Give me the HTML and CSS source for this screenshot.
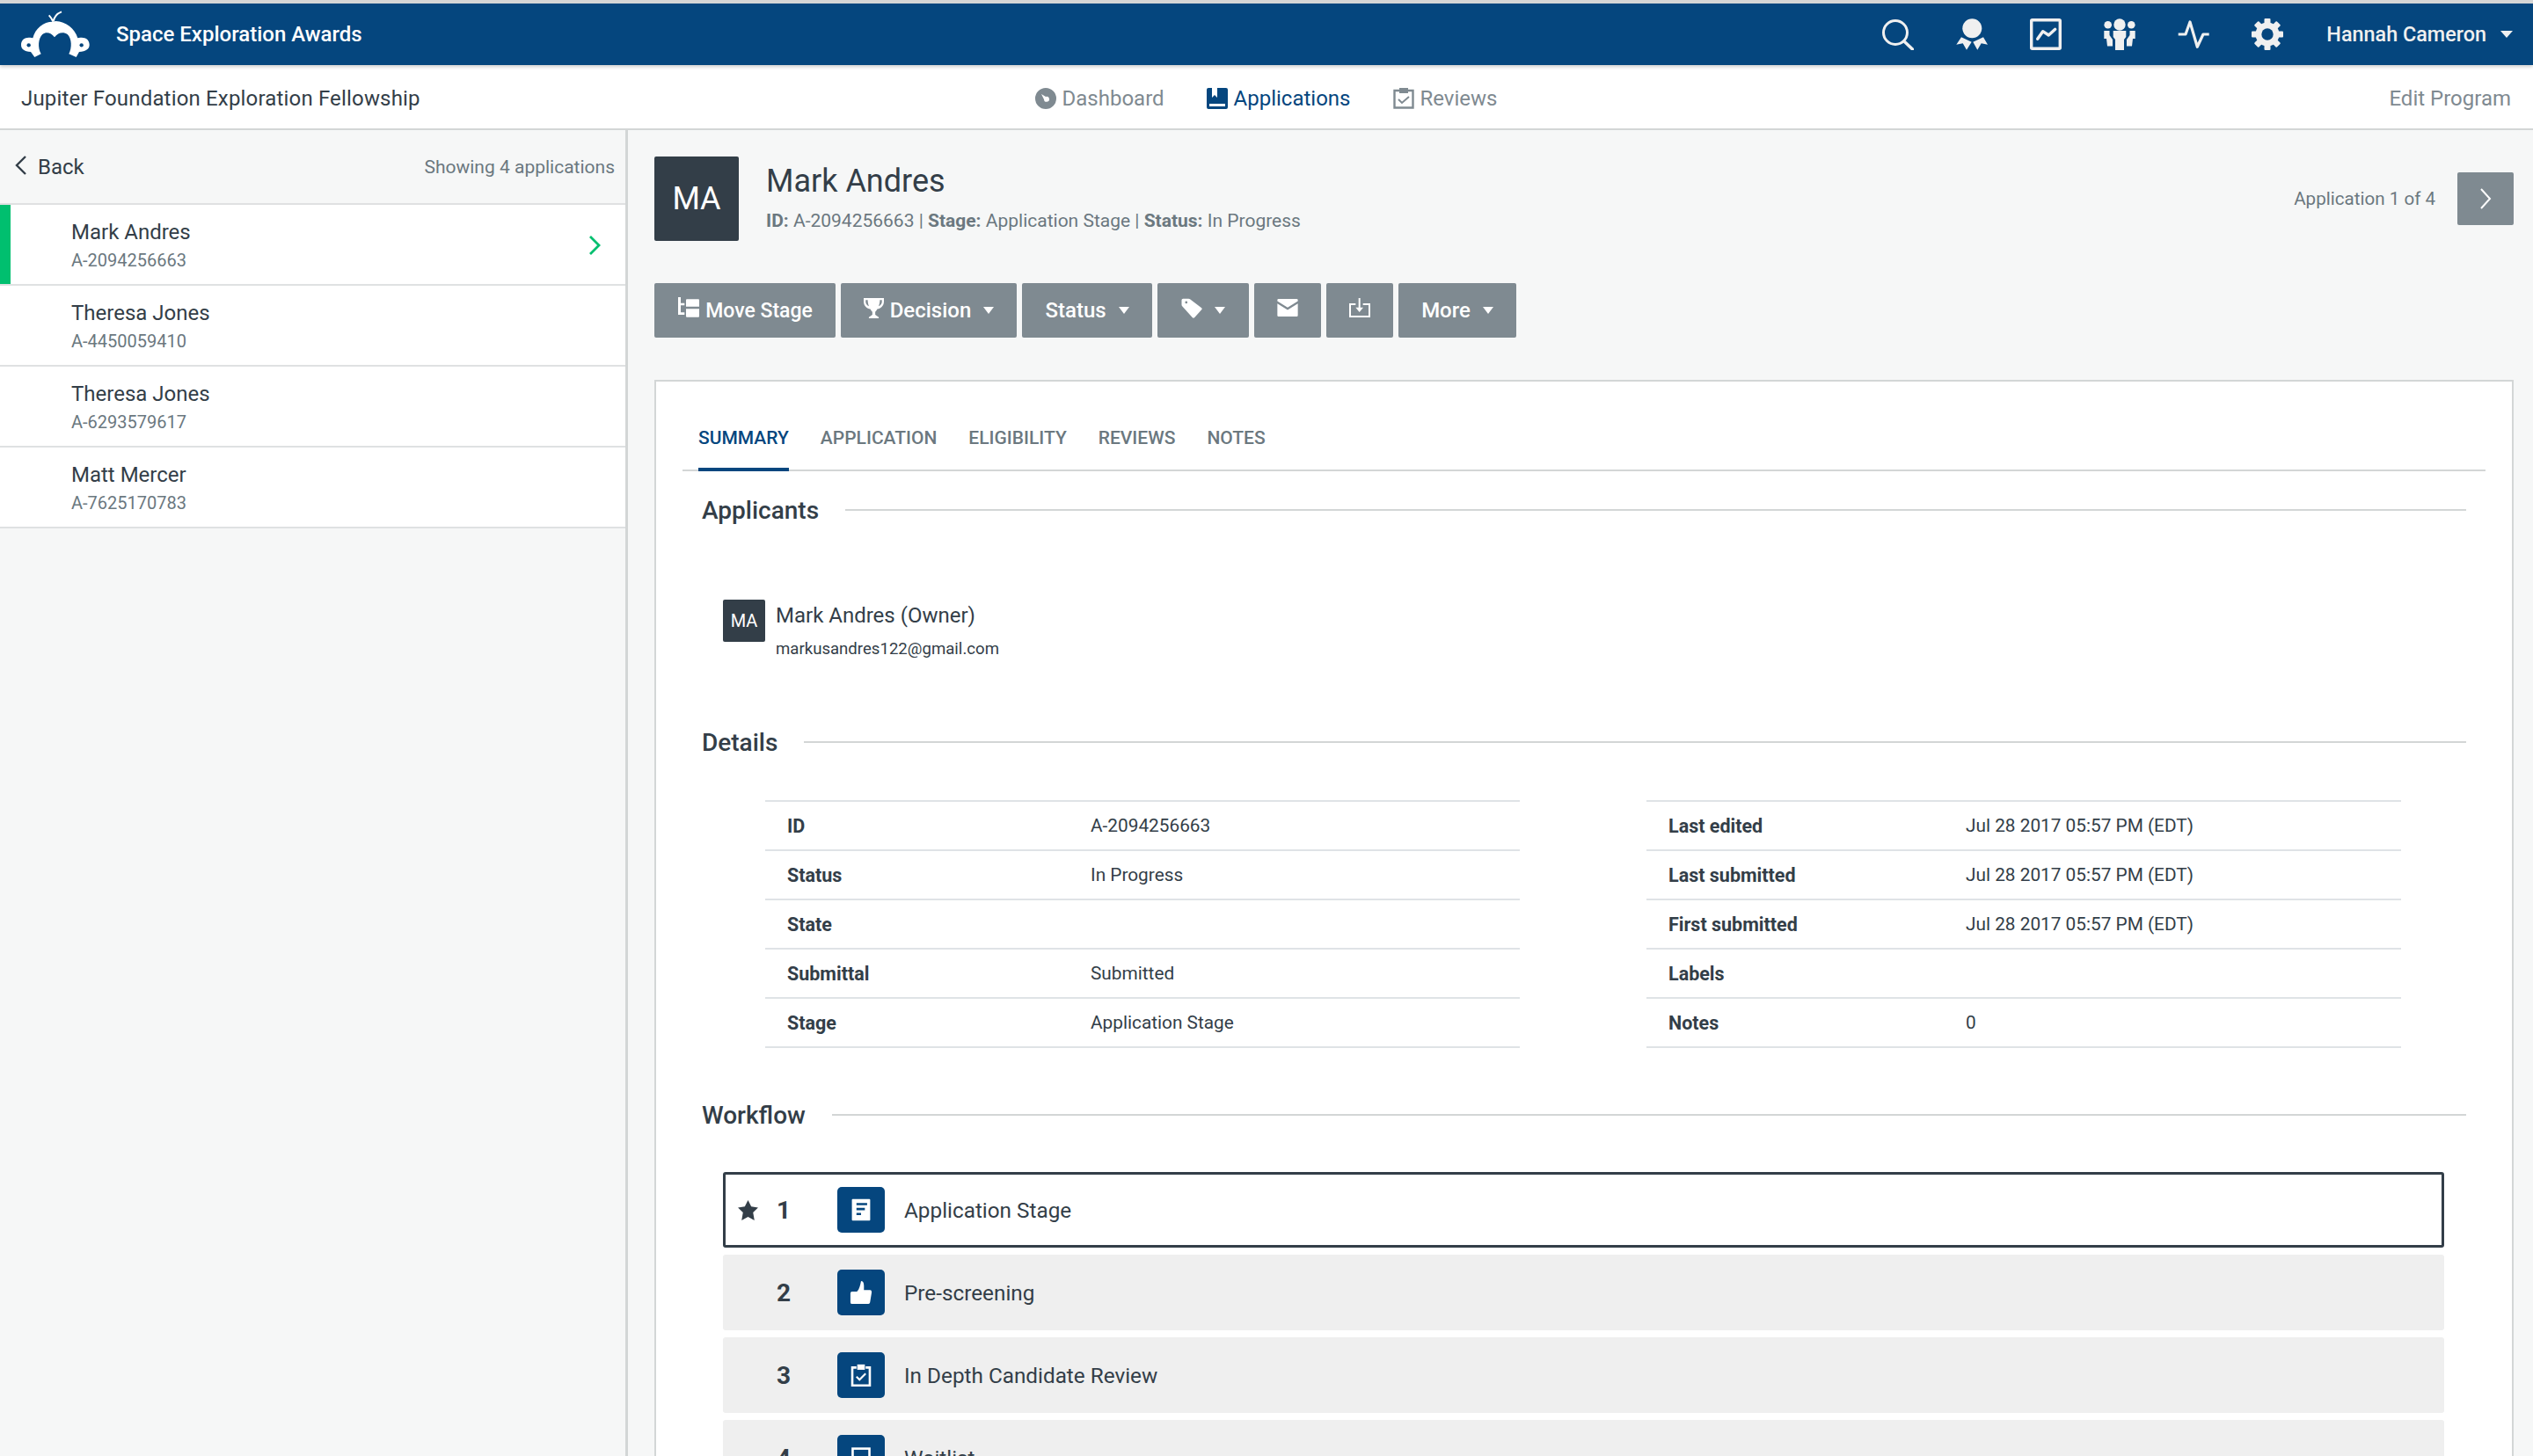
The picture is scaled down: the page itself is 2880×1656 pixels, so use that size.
FILE: index.html
```html
<!DOCTYPE html>
<html lang="en">
<head>
<meta charset="utf-8">
<title>Space Exploration Awards</title>
<link rel="stylesheet" href="styles.css">
</head>
<body>
<header class="topbar">
  <svg class="logo" viewBox="0 0 330 210"><path class="logo-body" d="M150 62C118 62 90 85 82 118C76 115 70 116 63 117C50 118 42 128 42 141C42 155 52 164 75 165L88 183L110 172C98 150 100 120 115 105C128 95 145 100 156 115C167 100 185 95 200 105C215 120 216 150 205 172L230 183L240 165C263 164 275 155 275 141C275 128 267 118 254 117C247 116 241 115 235 118C225 85 195 62 160 60Z"/><path class="logo-tuft" d="M151 62C147 52 143 46 137 40M152 62C154 46 165 34 180 28"/><circle class="logo-hole" cx="68" cy="142" r="6.500"/><circle class="logo-hole" cx="248" cy="142" r="6.500"/></svg>
  <div class="brand">Space Exploration Awards</div>
  <nav class="top-icons">
    <svg class="ticon" viewBox="0 0 36 36"><circle cx="15" cy="16" r="13.500" fill="none" stroke="currentColor" stroke-width="3"/><path d="M25.500 26.500L34.500 35" fill="none" stroke="currentColor" stroke-width="3.500" stroke-linecap="round"/></svg>
    <svg class="ticon" viewBox="0 0 36 36"><circle cx="18.300" cy="11.300" r="11" fill="currentColor"/><path d="M6 21.300L.3 29.700 7.700 28.300 12 35.700 17.700 26.700zM31 21.300L36 29.700 28.700 28.300 24.300 35.700 19.300 26.700z" fill="currentColor"/></svg>
    <svg class="ticon" viewBox="0 0 36 36"><rect x="1.700" y="1.700" width="32.600" height="32.600" rx="1" fill="none" stroke="currentColor" stroke-width="3.400"/><path d="M8.700 23.300L14.700 14.700 21.300 19 28.700 12.300" fill="none" stroke="currentColor" stroke-width="3.400" stroke-linecap="round" stroke-linejoin="round"/></svg>
    <svg class="ticon" viewBox="0 0 36 36"><circle cx="18" cy="7" r="6.700" fill="currentColor"/><circle cx="4.700" cy="7.300" r="4.300" fill="currentColor"/><circle cx="31.300" cy="7.300" r="4.300" fill="currentColor"/><path d="M10.700 14H25.300V21L23 24V36H13V24L10.700 21zM.3 14H6.500V19L10 24V31.500H4L3 23H.3zM35.700 14H29.500V19L26 24V31.500H32L33 23H35.700z" fill="currentColor"/></svg>
    <svg class="ticon" viewBox="0 0 36 36"><path d="M.7 18H9L14 4 22.300 32.300 29 18H35.700" fill="none" stroke="currentColor" stroke-width="3.200" stroke-linejoin="round"/></svg>
    <svg class="ticon" viewBox="0 0 36 36"><circle cx="18" cy="18" r="13.500" fill="currentColor"/><g fill="currentColor"><rect x="14.500" y="0" width="7" height="36" rx="1"/><rect x="14.500" y="0" width="7" height="36" rx="1" transform="rotate(45 18 18)"/><rect x="14.500" y="0" width="7" height="36" rx="1" transform="rotate(90 18 18)"/><rect x="14.500" y="0" width="7" height="36" rx="1" transform="rotate(135 18 18)"/></g><circle class="logo-hole" cx="18" cy="18" r="6.700"/></svg>
  </nav>
  <div class="user">Hannah Cameron<span class="caret caret-user"></span></div>
</header>

<div class="subnav">
  <div class="program">Jupiter Foundation Exploration Fellowship</div>
  <nav class="subnav-links">
    <a class="sublink"><svg class="sicon" viewBox="0 0 24 24"><path fill="currentColor" fill-rule="evenodd" d="M12 0a12 12 0 1 0 0 24a12 12 0 1 0 0-24zM7 7l5 3a3 3 0 1 1-2 3z"/></svg>Dashboard</a>
    <a class="sublink sublink-active"><svg class="sicon" viewBox="0 0 24 24"><path fill="currentColor" fill-rule="evenodd" d="M2 0h4v11l3-3 3 3V0h10a2 2 0 0 1 2 2v20a2 2 0 0 1-2 2H2a2 2 0 0 1-2-2V2a2 2 0 0 1 2-2zM3 18v3h18v-3z"/></svg>Applications</a>
    <a class="sublink"><svg class="sicon" viewBox="0 0 24 24"><path fill="none" stroke="currentColor" stroke-width="2.400" d="M7 3H1.500v19.500h21V3H17"/><path fill="currentColor" d="M7 0h10v6H7z"/><path fill="none" stroke="currentColor" stroke-width="2" d="M6 13l4 4 8-7"/></svg>Reviews</a>
  </nav>
  <a class="edit-program">Edit Program</a>
</div>

<main class="workspace">
  <aside class="sidebar">
    <div class="back-row">
      <a class="back"><svg class="back-chevron" viewBox="0 0 14 22"><path d="M12 1L2 11l10 10" fill="none" stroke="currentColor" stroke-width="2.400"/></svg>Back</a>
      <span class="showing">Showing 4 applications</span>
    </div>
    <ul class="app-list">
      <li class="app-item app-item-active">
        <div class="app-name">Mark Andres</div><div class="app-id">A-2094256663</div>
        <svg class="app-chevron" viewBox="0 0 14 22"><path d="M2 1l10 10L2 21" fill="none" stroke="currentColor" stroke-width="2.800"/></svg>
      </li>
      <li class="app-item"><div class="app-name">Theresa Jones</div><div class="app-id">A-4450059410</div></li>
      <li class="app-item"><div class="app-name">Theresa Jones</div><div class="app-id">A-6293579617</div></li>
      <li class="app-item"><div class="app-name">Matt Mercer</div><div class="app-id">A-7625170783</div></li>
    </ul>
  </aside>

  <section class="detail">
    <div class="head">
      <div class="avatar-lg">MA</div>
      <div class="head-text">
        <h1 class="head-name">Mark Andres</h1>
        <p class="head-meta"><b>ID:</b> A-2094256663 | <b>Stage:</b> Application Stage | <b>Status:</b> In Progress</p>
      </div>
      <div class="pager">
        <span class="pager-text">Application 1 of 4</span>
        <a class="pager-btn"><svg class="pager-chevron" viewBox="0 0 14 24"><path d="M2 1l10 11L2 23" fill="none" stroke="currentColor" stroke-width="2"/></svg></a>
      </div>
    </div>

    <div class="actions">
      <a class="btn btn-move"><svg class="bicon bicon-move" viewBox="0 0 25 24"><path fill="currentColor" d="M1 0h3v6.700h4.300v2.600H4v8h4.300V20H1zM11 2.300h13a1 1 0 0 1 1 1v7.400H10V3.300a1 1 0 0 1 1-1zM10 13.300h15v8.400a1 1 0 0 1-1 1H11a1 1 0 0 1-1-1z"/></svg>Move Stage</a>
      <a class="btn btn-decision"><svg class="bicon bicon-trophy" viewBox="0 0 70 70"><path fill="currentColor" fill-rule="evenodd" d="M0 0H70V12C70 28 58 36 47 38C44 44 41 46 40 48V58L52 66V70H18V66L30 58V48C29 46 26 44 23 38C12 36 0 28 0 12ZM7 7V14C7 20 12 26 18 28C15 20 14 14 14 7ZM63 7H56C56 14 55 20 52 28C58 26 63 20 63 14Z"/></svg>Decision<span class="caret"></span></a>
      <a class="btn btn-status">Status<span class="caret"></span></a>
      <a class="btn btn-tag"><svg class="bicon bicon-tag" viewBox="0 0 72 70"><path fill="currentColor" fill-rule="evenodd" d="M6 2H25Q28 2 30 4L70 34Q73 37 70 40L46 67Q42 71 38 67L3 28Q1 26 1 23V7Q1 2 6 2ZM17 11a4 4 0 1 0 0 8a4 4 0 1 0 0-8z"/></svg><span class="caret"></span></a>
      <a class="btn btn-mail"><svg class="bicon bicon-mail" viewBox="0 0 71 61"><path fill="currentColor" d="M4 0H67Q71 0 71 4V8L35.500 30 0 8V4Q0 0 4 0ZM0 16L35.500 38 71 16V57Q71 61 67 61H4Q0 61 0 57Z"/></svg></a>
      <a class="btn btn-download"><svg class="bicon bicon-download" viewBox="0 0 72 66"><path fill="none" stroke="currentColor" stroke-width="6" d="M22 21H3V63H69V21H47"/><path fill="none" stroke="currentColor" stroke-width="6" d="M35 0V36"/><path fill="currentColor" d="M22 32H48L35 48Z"/></svg></a>
      <a class="btn btn-more">More<span class="caret"></span></a>
    </div>

    <div class="card">
      <div class="tabs">
        <a class="tab tab-active">SUMMARY</a>
        <a class="tab">APPLICATION</a>
        <a class="tab">ELIGIBILITY</a>
        <a class="tab">REVIEWS</a>
        <a class="tab">NOTES</a>
      </div>

      <div class="panel">
        <h2 class="section-title">Applicants</h2>
        <div class="owner">
          <div class="avatar-sm">MA</div>
          <div>
            <div class="owner-name">Mark Andres (Owner)</div>
            <div class="owner-mail">markusandres122@gmail.com</div>
          </div>
        </div>

        <h2 class="section-title">Details</h2>
        <div class="tables">
          <dl class="facts">
            <dt>ID</dt><dd>A-2094256663</dd>
            <dt>Status</dt><dd>In Progress</dd>
            <dt>State</dt><dd></dd>
            <dt>Submittal</dt><dd>Submitted</dd>
            <dt>Stage</dt><dd>Application Stage</dd>
          </dl>
          <dl class="facts facts-right">
            <dt>Last edited</dt><dd>Jul 28 2017 05:57 PM (EDT)</dd>
            <dt>Last submitted</dt><dd>Jul 28 2017 05:57 PM (EDT)</dd>
            <dt>First submitted</dt><dd>Jul 28 2017 05:57 PM (EDT)</dd>
            <dt>Labels</dt><dd></dd>
            <dt>Notes</dt><dd>0</dd>
          </dl>
        </div>

        <h2 class="section-title section-workflow">Workflow</h2>
        <ol class="stages">
          <li class="stage stage-current">
            <svg class="star" viewBox="0 0 24 24"><path fill="currentColor" d="M12 1l3.500 7 7.500 1-5.500 5.500L19 23l-7-3.800L5 23l1.500-8.500L1 9l7.500-1z"/></svg>
            <span class="stage-num">1</span>
            <span class="stage-icon"><svg viewBox="0 0 26 30"><path fill="currentColor" fill-rule="evenodd" d="M2 1h22a1 1 0 0 1 1 1v26a1 1 0 0 1-1 1H2a1 1 0 0 1-1-1V2a1 1 0 0 1 1-1zM7 6v3h14V6zM7 12.500v3h11v-3zM7 19v3h6v-3z"/></svg></span>
            <span class="stage-name">Application Stage</span>
          </li>
          <li class="stage">
            <span class="stage-spacer"></span>
            <span class="stage-num">2</span>
            <span class="stage-icon"><svg viewBox="0 1 26 28"><path fill="currentColor" d="M2 14h6c3-3 4-8 5-13 3 0 4 3 3.500 11H24c2 0 2 2 2 3l-2 12c-.5 1.500-1.500 2-3 2H2a2 2 0 0 1-2-2V16a2 2 0 0 1 2-2z"/></svg></span>
            <span class="stage-name">Pre-screening</span>
          </li>
          <li class="stage">
            <span class="stage-spacer"></span>
            <span class="stage-num">3</span>
            <span class="stage-icon"><svg viewBox="0 0 26 30"><path fill="none" stroke="currentColor" stroke-width="3" d="M7 5H1.500v23.500h23V5H19"/><path fill="currentColor" d="M8 1h10v7H8z"/><path fill="none" stroke="currentColor" stroke-width="2.500" d="M7 17l4 4 8-8"/></svg></span>
            <span class="stage-name">In Depth Candidate Review</span>
          </li>
          <li class="stage">
            <span class="stage-spacer"></span>
            <span class="stage-num">4</span>
            <span class="stage-icon"><svg viewBox="0 0 26 30"><rect x="2" y="3" width="22" height="24" fill="none" stroke="currentColor" stroke-width="3"/></svg></span>
            <span class="stage-name">Waitlist</span>
          </li>
        </ol>
      </div>
    </div>
  </section>
</main>
</body>
</html>
```

FILE: styles.css
```css
* { box-sizing: border-box; }
html, body { height: 100%; margin: 0; }
body {
  display: flex;
  flex-direction: column;
  overflow: hidden;
  font-family: Roboto, "Liberation Sans", sans-serif;
  color: #333e48;
  background: #fff;
}
a { color: inherit; text-decoration: none; }
h1, h2, p, dl, dd, ul, ol { margin: 0; padding: 0; list-style: none; }

.topbar {
  flex: none;
  display: flex;
  align-items: center;
  height: 74px;
  border-top: 4px solid #d6d6d6;
  background: #05467e;
  color: #f0f0f0;
  box-shadow: 0 2px 4px rgba(0,0,0,.2);
  position: relative;
  z-index: 1;
}
.logo { width: 110px; height: 70px; margin-left: 10px; flex: none; display: block; }
.logo-body { fill: #fff; }
.logo-tuft { fill: none; stroke: #fff; stroke-width: 6; }
.logo-hole { fill: #05467e; }
.brand { margin-left: 12px; font-size: 24px; font-weight: 500; color: #fff; }
.top-icons { margin-left: auto; display: flex; gap: 48px; }
.ticon { width: 36px; height: 36px; display: block; }
.user { margin-left: 49px; margin-right: 23px; font-size: 23.400px; font-weight: 500; display: flex; align-items: center; }
.caret {
  display: inline-block;
  width: 0; height: 0;
  margin-left: 14px;
  border-left: 6px solid transparent;
  border-right: 6px solid transparent;
  border-top: 8px solid currentColor;
}
.caret-user { margin-left: 16px; border-left-width: 7px; border-right-width: 7px; }

.subnav {
  flex: none;
  display: grid;
  grid-template-columns: 1fr auto 1fr;
  align-items: center;
  height: 74px;
  padding: 4px 25px 0 24px;
  border-bottom: 2px solid #d3d6d6;
  font-size: 24px;
}
.program { color: #333e48; letter-spacing: .17px; }
.subnav-links { display: flex; gap: 48px; color: #7f8a91; }
.sublink { display: flex; align-items: center; gap: 7px; }
.sublink-active { color: #05467e; }
.sicon { width: 24px; height: 24px; display: block; flex: none; }
.edit-program { justify-self: end; color: #7f8a91; }

.workspace {
  flex: 1;
  min-height: 0;
  display: grid;
  grid-template-columns: 714px 1fr;
  background: #f6f7f7;
}
.sidebar { border-right: 3px solid #d3d6d6; }
.back-row {
  display: flex;
  align-items: center;
  justify-content: space-between;
  height: 85px;
  padding: 0 12px 0 17px;
  border-bottom: 2px solid #dfe1e2;
}
.back { display: flex; align-items: center; gap: 12px; font-size: 24px; }
.back-chevron { width: 14px; height: 22px; margin-top: -4px; }
.showing { font-size: 21px; color: #6b787f; }
.app-item {
  position: relative;
  height: 92px;
  padding: 15px 0 0 81px;
  background: #fff;
  border-bottom: 2px solid #dfe1e2;
}
.app-item-active { box-shadow: inset 12px 0 0 #00bf6f; }
.app-name { font-size: 24px; line-height: 32px; }
.app-id { font-size: 20px; line-height: 30px; color: #6b787f; margin-top: 1px; }
.app-chevron { position: absolute; right: 28px; top: 35px; width: 14px; height: 22px; color: #00bf6f; }

.detail { padding: 30px 22px 0 30px; min-width: 0; overflow: hidden; }
.head { display: flex; align-items: center; height: 96px; }
.avatar-lg {
  width: 96px; height: 96px;
  display: flex; align-items: center; justify-content: center;
  background: #333e48; border-radius: 2px;
  color: #fff; font-size: 36px; flex: none;
}
.head-text { margin-left: 31px; align-self: flex-start; }
.head-name { font-size: 36px; font-weight: 400; line-height: 44px; margin-top: 6px; }
.head-meta { font-size: 21px; line-height: 28px; margin-top: 9px; color: #6b787f; }
.head-meta b { font-weight: 700; }
.pager { margin-left: auto; display: flex; align-items: center; gap: 25px; }
.pager-text { font-size: 20.600px; color: #6b787f; }
.pager-btn {
  width: 64px; height: 60px;
  display: flex; align-items: center; justify-content: center;
  background: #7f8a91; color: #fff; border-radius: 2px;
}
.pager-chevron { width: 14px; height: 24px; }

.actions { display: flex; gap: 6px; margin-top: 48px; }
.btn {
  height: 62px;
  display: flex; align-items: center; justify-content: center;
  background: #7f8a91; color: #fff;
  border-radius: 2px;
  font-size: 24px; font-weight: 500;
}
.bicon { display: block; flex: none; margin-top: -6px; }
.bicon-move { width: 25px; height: 24px; margin-right: 7px; }
.bicon-trophy { width: 23px; height: 23px; margin-right: 7px; }
.bicon-tag { width: 24px; height: 23px; }
.bicon-mail { width: 24px; height: 20px; }
.bicon-download { width: 24px; height: 22px; }
.btn-move { width: 206px; font-size: 23px; }
.btn-decision { width: 200px; }
.btn-status { width: 148px; }
.btn-tag { width: 104px; }
.btn-mail { width: 76px; }
.btn-download { width: 76px; }
.btn-more { width: 134px; }

.card {
  background: #fff;
  border: 2px solid #d3d6d6;
  margin-top: 48px;
  padding: 0 30px;
  height: 1400px;
}
.tabs {
  display: flex;
  gap: 36px;
  height: 102px;
  padding: 0 0 0 18px;
  border-bottom: 2px solid #d3d6d6;
}
.tab {
  height: 102px;
  padding-top: 50px;
  font-size: 21px; line-height: 28px; font-weight: 500;
  color: #6b787f;
}
.tab-active { color: #05467e; border-bottom: 4px solid #05467e; }

.panel { padding: 0 22px; }
.section-title {
  display: flex; align-items: center;
  gap: 30px;
  height: 32px;
  margin-top: 28px;
  font-size: 28px; font-weight: 500;
}
.section-title::after { content: ""; flex: 1; height: 2px; background: #d3d6d6; }
.owner { display: flex; gap: 12px; margin: 86px 0 84px 24px; height: 62px; }
.avatar-sm {
  width: 48px; height: 48px;
  display: flex; align-items: center; justify-content: center;
  background: #333e48; border-radius: 2px; color: #fff; font-size: 20px;
}
.owner-name { font-size: 24px; line-height: 36px; }
.owner-mail { font-size: 18.600px; line-height: 28px; margin-top: 6px; }

.tables { display: flex; gap: 144px; margin: 50px 0 0 72px; }
.facts {
  width: 858px;
  display: grid;
  grid-template-columns: 370px 1fr;
  grid-auto-rows: 56px;
  border-top: 2px solid #dfe3e6;
}
.facts-right { grid-template-columns: 363px 1fr; }
.facts dt, .facts dd {
  display: flex; align-items: center;
  font-size: 20.800px;
  border-bottom: 2px solid #dfe3e6;
  height: 56px;
}
.facts dt { padding-left: 25px; font-weight: 700; font-size: 21.500px; }
.section-workflow { margin-top: 60px; }

.stages { margin: 49px 25px 0 24px; display: flex; flex-direction: column; gap: 8px; }
.stage {
  display: flex; align-items: center;
  height: 86px;
  padding-left: 13px;
  background: #efefef;
  border: 3px solid transparent;
  border-radius: 3px;
}
.stage-current { background: #fff; border-color: #333e48; }
.star { width: 25px; height: 25px; flex: none; }
.stage-spacer { width: 25px; flex: none; }
.stage-num { width: 69px; margin-left: 20px; font-size: 28px; font-weight: 700; flex: none; }
.stage-icon {
  width: 54px; height: 52px;
  display: flex; align-items: center; justify-content: center;
  background: #05467e; color: #fff; border-radius: 5px; flex: none;
}
.stage-icon svg { width: 26px; height: 26px; display: block; }
.stage-name { margin-left: 22px; font-size: 24.300px; }
```
